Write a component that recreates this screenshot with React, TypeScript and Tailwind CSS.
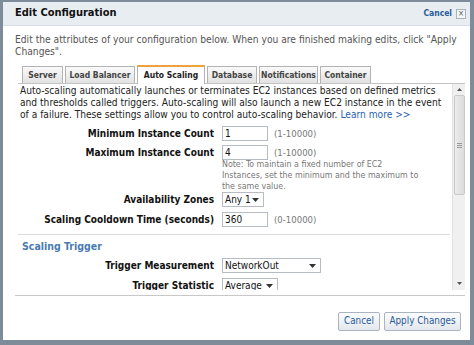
import React from "react";

const ui = "font-['DejaVu_Sans_Condensed','DejaVu_Sans',Tahoma,sans-serif]";

const tabs = [
  { name: "Server", w: "w-[41px]" },
  { name: "Load Balancer", w: "w-[70px]" },
  { name: "Auto Scaling", w: "w-[68px]", active: true },
  { name: "Database", w: "w-[50px]" },
  { name: "Notifications", w: "w-[59px]" },
  { name: "Container", w: "w-[51px]" },
];

function Row({ label, className = "", children }: { label: string; className?: string; children: React.ReactNode }) {
  return (
    <div className={`flex items-start gap-[8px] ${className}`}>
      <div className="w-[194px] shrink-0 text-right font-bold text-[10px] text-[#111] leading-[15px] whitespace-nowrap">
        {label}
      </div>
      <div className="flex items-start gap-[6px]">{children}</div>
    </div>
  );
}

function TextBox({ value }: { value: string }) {
  return (
    <div className="w-[46px] h-[15px] border border-[#b5bcc4] bg-white px-[2px] text-[10px] leading-[13px] text-[#111]">
      {value}
    </div>
  );
}

function Select({ value, w }: { value: string; w: string }) {
  return (
    <div className={`${w} h-[15px] shrink-0 border border-[#b5bcc4] bg-white pl-[2px] pr-[4px] flex items-center justify-between text-[10px] text-[#111]`}>
      <span>{value}</span>
      <svg width="7" height="4" viewBox="0 0 7 4"><path d="M0 0h7L3.5 4z" fill="#333" /></svg>
    </div>
  );
}

function Range({ text }: { text: string }) {
  return <span className="text-[9.5px] text-[#777] leading-[15px]">{text}</span>;
}

export default function App() {
  return (
    <div className={`w-[474px] h-[345px] bg-[#7e8b98] pt-[2px] pl-[3px] pr-[4px] pb-[5px] ${ui}`}>
      <div className="h-full flex flex-col bg-white">
        {/* Title bar */}
        <div className="h-[24px] shrink-0 bg-[#e8edf2] border-b border-[#d9e0e7] flex items-center justify-between pl-[12px] pr-[4px]">
          <span className="text-[11px] font-bold text-[#111]">Edit Configuration</span>
          <div className="flex items-center gap-[4px]">
            <span className="text-[8.5px] font-bold text-[#2a5a9a]">Cancel</span>
            <span className="w-[10px] h-[10px] border border-[#a8b2bc] bg-[#f4f6f8] flex items-center justify-center text-[8px] leading-none text-[#556]">
              ×
            </span>
          </div>
        </div>

        <div className="flex-1 flex flex-col pl-[12px] pr-[5px]">
          <p className="mt-[8px] text-[10.2px] leading-[12px] text-[#555]">
            Edit the attributes of your configuration below. When you are finished making edits, click "Apply Changes".
          </p>

          {/* Tabs */}
          <div className="mt-[7px] pl-[7px] flex items-end gap-[2px] h-[18px]">
            {tabs.map((t) =>
              t.active ? (
                <div
                  key={t.name}
                  className={`${t.w} h-[19px] border border-[#b3b3b3] border-t-2 border-t-[#f0a23a] border-b-0 bg-white flex items-center justify-center text-[8.5px] font-bold text-[#222] whitespace-nowrap relative top-[1px] z-10`}
                >
                  {t.name}
                </div>
              ) : (
                <div
                  key={t.name}
                  className={`${t.w} h-[17px] border border-[#b3b3b3] border-b-0 bg-gradient-to-b from-[#fafafa] to-[#e2e2e2] flex items-center justify-center text-[8.5px] font-bold text-[#444] whitespace-nowrap`}
                >
                  {t.name}
                </div>
              )
            )}
          </div>

          {/* Panel */}
          <div className="ml-[3px] h-[207px] shrink-0 border-t border-[#c4c4c4] flex overflow-hidden">
            <div className="flex-1 overflow-hidden pl-[2px] pr-[2px]">
              <p className="mt-[1px] h-[36px] text-[10.15px] leading-[12px] text-[#222]">
                Auto-scaling automatically launches or terminates EC2 instances based on defined metrics and thresholds
                called triggers. Auto-scaling will also launch a new EC2 instance in the event of a failure. These
                settings allow you to control auto-scaling behavior.{" "}
                <span className="text-[#2a62b0]">Learn more &gt;&gt;</span>
              </p>

              <Row label="Minimum Instance Count" className="mt-[5px]">
                <TextBox value="1" />
                <Range text="(1-10000)" />
              </Row>
              <Row label="Maximum Instance Count" className="mt-[4px]">
                <div className="flex flex-col">
                  <div className="flex items-start gap-[6px]">
                    <TextBox value="4" />
                    <Range text="(1-10000)" />
                  </div>
                  <p className="-mt-[1px] w-[200px] text-[8.8px] leading-[11px] text-[#777]">
                    Note: To maintain a fixed number of EC2 Instances, set the minimum and the maximum to the same value.
                  </p>
                </div>
              </Row>
              <Row label="Availability Zones" className="mt-[0px]">
                <Select value="Any 1" w="w-[42px]" />
              </Row>
              <Row label="Scaling Cooldown Time (seconds)" className="mt-[5px]">
                <TextBox value="360" />
                <Range text="(0-10000)" />
              </Row>

              <div className="mt-[7px] -ml-[5px] border-t border-[#dcdcdc]" />
              <div className="mt-[5px] pl-[2px] text-[10.5px] leading-[13px] font-bold text-[#4a7bb0]">Scaling Trigger</div>

              <Row label="Trigger Measurement" className="mt-[5px]">
                <Select value="NetworkOut" w="w-[99px]" />
              </Row>
              <Row label="Trigger Statistic" className="mt-[5px]">
                <Select value="Average" w="w-[56px]" />
              </Row>
            </div>

            {/* Scrollbar */}
            <div className="w-[13px] shrink-0 bg-[#f0f0f0] border-l border-[#e2e2e2] flex flex-col items-center">
              <div className="h-[10px] flex items-center justify-center">
                <svg width="5" height="3" viewBox="0 0 5 3"><path d="M0 3h5L2.5 0z" fill="#555" /></svg>
              </div>
              <div className="mt-[1px] w-[11px] h-[100px] border border-[#c9c9c9] rounded-[2px] bg-gradient-to-r from-[#ececec] to-[#dcdcdc] flex flex-col items-center justify-center gap-[1px]">
                <div className="w-[5px] h-[1px] bg-[#999]" />
                <div className="w-[5px] h-[1px] bg-[#999]" />
                <div className="w-[5px] h-[1px] bg-[#999]" />
              </div>
              <div className="flex-1" />
              <div className="h-[10px] mb-[2px] flex items-center justify-center">
                <svg width="5" height="3" viewBox="0 0 5 3"><path d="M0 0h5L2.5 3z" fill="#555" /></svg>
              </div>
            </div>
          </div>

          <div className="mt-[5px] border-t border-[#c8c8c8]" />

          {/* Buttons */}
          <div className="flex-1 flex items-center justify-end gap-[4px] pr-[4px] pt-[6px]">
            <button className="h-[19px] w-[42px] border border-[#a9b4c0] rounded-[2px] bg-gradient-to-b from-[#fbfcfd] to-[#e3e8ee] text-[9.8px] text-[#2a5a9a]">
              Cancel
            </button>
            <button className="h-[19px] w-[77px] border border-[#a9b4c0] rounded-[2px] bg-gradient-to-b from-[#fbfcfd] to-[#e3e8ee] text-[9.8px] text-[#2a5a9a]">
              Apply Changes
            </button>
          </div>
        </div>
      </div>
    </div>
  );
}
